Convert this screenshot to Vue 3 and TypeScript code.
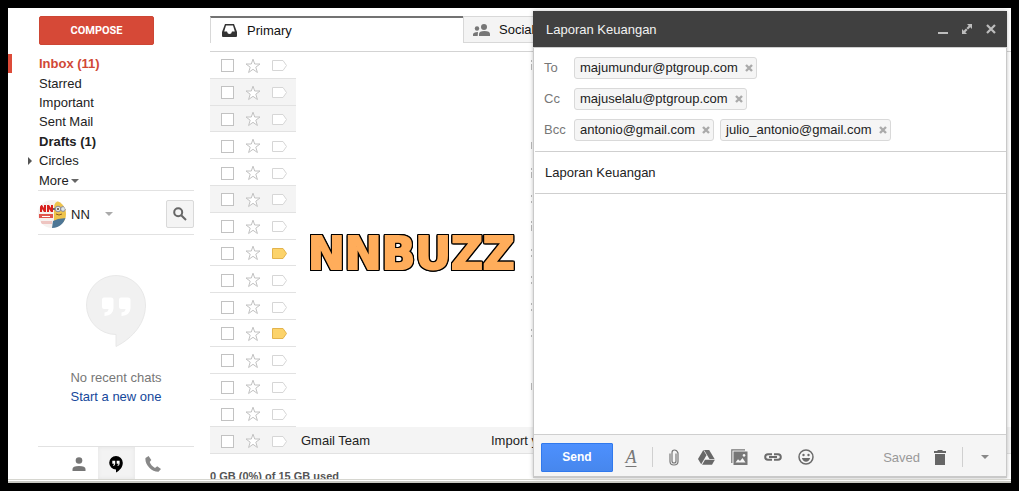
<script setup lang="ts">
import { ref } from 'vue'

interface Folder {
  name: string
  kind?: 'active' | 'bold' | 'tree' | 'more'
}

interface Mail {
  id: number
  read: boolean
  important: boolean
  mark: '' | 'letter' | 'stem' | 'dots'
  sender?: string
  subject?: string
}

interface Field {
  label: string
  people: string[]
}

const folders: Folder[] = [
  { name: 'Inbox (11)', kind: 'active' },
  { name: 'Starred' },
  { name: 'Important' },
  { name: 'Sent Mail' },
  { name: 'Drafts (1)', kind: 'bold' },
  { name: 'Circles', kind: 'tree' },
  { name: 'More', kind: 'more' },
]

const readRows = [1, 2, 5, 14]
const importantRows = [7, 10]
const marks: Mail['mark'][] = [
  'letter', '', '', 'stem', 'letter', 'dots', 'letter', 'dots',
  'dots', 'dots', 'dots', '', 'stem', '', '',
]

const mails: Mail[] = marks.map((mark, id) => ({
  id,
  mark,
  read: readRows.includes(id),
  important: importantRows.includes(id),
  sender: id === 14 ? 'Gmail Team' : undefined,
  subject: id === 14 ? 'Import your' : undefined,
}))

const fields = ref<Field[]>([
  { label: 'To', people: ['majumundur@ptgroup.com'] },
  { label: 'Cc', people: ['majuselalu@ptgroup.com'] },
  { label: 'Bcc', people: ['antonio@gmail.com', 'julio_antonio@gmail.com'] },
])

const subject = ref('Laporan Keuangan')
const message = ref('')

function removePerson(field: Field, person: string): void {
  field.people = field.people.filter((p) => p !== person)
}
</script>

<template>
  <div class="frame">
    <div class="mail">
      <aside class="sidebar">
        <button class="compose-btn" type="button">COMPOSE</button>
        <nav class="folders">
          <a v-for="f in folders" :key="f.name" href="#" :class="['folder', f.kind]">
            <svg v-if="f.kind === 'tree'" class="tree-arrow" viewBox="0 0 4 8"><path d="M0 0L4 4L0 8z" /></svg>
            <span>{{ f.name }}</span>
            <svg v-if="f.kind === 'more'" class="caret" viewBox="0 0 8 4"><path d="M0 0H8L4 4z" /></svg>
          </a>
        </nav>
        <div class="account">
          <svg class="avatar" viewBox="0 0 28 28">
            <defs><clipPath id="round"><circle cx="14" cy="14" r="14" /></clipPath></defs>
            <g clip-path="url(#round)">
              <rect width="28" height="28" fill="#f6f1ef" />
              <path d="M2 5h2l2 3V5h2v7H6L4 9v3H2zM9 5h2l2 3V5h2v7h-2l-2-3v3H9z" fill="#d8201c" />
              <path d="M1 14h14v4H1z" fill="#e0564e" />
              <path d="M4 16h8v1H4z" fill="#fff" />
              <path d="M3 21h11v3H3z" fill="#eec4c0" />
              <path d="M16 8q0-7 6-7t6 7v14H16z" fill="#eec34b" />
              <path d="M15 21l5-2 8-1v10H14z" fill="#4d7695" />
              <path d="M15 8h13v2H15z" fill="#666" />
              <circle cx="20" cy="9" r="2.800" fill="#dfe7e9" stroke="#889" />
              <circle cx="25" cy="9" r="2.400" fill="#dfe7e9" stroke="#889" />
              <circle cx="20" cy="9" r="1" fill="#5b4630" />
              <path d="M18 14q3 2 6 0" fill="none" stroke="#8b5b25" />
            </g>
          </svg>
          <span class="account-name">NN</span>
          <svg class="caret pale" viewBox="0 0 8 4"><path d="M0 0H8L4 4z" /></svg>
          <button class="search" type="button" aria-label="Search people">
            <svg viewBox="0 0 14 14"><circle cx="5.2" cy="5.2" r="4" /><path d="M8.2 8.2L13 13" /></svg>
          </button>
        </div>
        <div class="chats">
          <svg class="bubble" viewBox="0 0 60 72">
            <path d="M30 .5A29.5 29.5 0 0 0 30 59.500V71.500C47 63 59.500 48 59.500 30A29.500 29.500 0 0 0 30 .5z" fill="#f1f1f1" stroke="#e8e8e8" />
            <path d="M18 22.500h7a2.500 2.500 0 0 1 2.500 2.500v8q0 7-9 8v-3.500q4-.5 4-3.500H18a2 2 0 0 1-2-2v-7.500a2 2 0 0 1 2-2zM35 22.500h7a2.500 2.500 0 0 1 2.500 2.500v8q0 7-9 8v-3.500q4-.5 4-3.500H35a2 2 0 0 1-2-2v-7.500a2 2 0 0 1 2-2z" fill="#fff" />
          </svg>
          <p>No recent chats</p>
          <a href="#">Start a new one</a>
        </div>
        <div class="chat-tabs">
          <button type="button" aria-label="Contacts">
            <svg viewBox="0 0 14 14" width="14" height="14"><circle cx="7" cy="3.500" r="3.300" /><path d="M.5 14v-2Q.5 9 7 9t6.500 3v2z" /></svg>
          </button>
          <button type="button" class="on" aria-label="Hangouts">
            <svg viewBox="0 0 14 17" width="14" height="17">
              <path d="M7 0A6.800 6.800 0 0 0 7 13.600V16.500C11 14.500 13.800 11 13.800 6.800A6.800 6.800 0 0 0 7 0z" fill="#000" />
              <path d="M3.300 4.800h2.900v3q0 2-2 2.200V8.800q1-.2 1-1H3.300zM7.700 4.800h2.900v3q0 2-2 2.200V8.800q1-.2 1-1H7.700z" fill="#fff" />
            </svg>
          </button>
          <button type="button" aria-label="Phone">
            <svg viewBox="0 0 16 16" width="16" height="16"><path d="M3.600 0L.5 2C-.5 8 6.500 16 13.500 15.800L16 12.900 12.200 10.200 10 11.900C7.600 10.800 5.500 8.400 4.700 6L6.300 4z" fill="#888" /></svg>
          </button>
        </div>
      </aside>

      <main class="inbox">
        <div class="tabs">
          <a class="tab primary" href="#">
            <svg viewBox="0 0 15 13" width="15" height="13"><path fill-rule="evenodd" d="M3 0h9l3 8v4q0 1-1 1H1q-1 0-1-1V8zM4 1.500L2.200 7.500H5q.5 2.500 2.500 2.500T10 7.500h2.800L11 1.500z" fill="#333" /></svg>
            Primary
          </a>
          <a class="tab social" href="#">
            <svg viewBox="0 0 18 12" width="18" height="12" fill="#777"><circle cx="11" cy="3" r="3" /><circle cx="4" cy="4.500" r="2.200" /><path d="M6 12v-2q0-3 5.500-3T17 10v2zM0 12v-1.500Q0 8 5 8L4.700 12z" /></svg>
            Social
          </a>
        </div>
        <div class="list">
          <div v-for="m in mails" :key="m.id" :class="['row', { read: m.read, full: m.sender }]">
            <div class="tools">
              <input type="checkbox" :aria-label="`Select conversation ${m.id + 1}`" />
              <button type="button" aria-label="Star">
                <svg viewBox="0 0 16 16" width="16" height="16"><path d="M8 1.200L9.700 6H15L10.800 9.200 12.400 14.500 8 11.300 3.600 14.500 5.200 9.200 1 6H6.300z" fill="#fff" stroke="#c2c2c2" /></svg>
              </button>
              <button type="button" aria-label="Important">
                <svg viewBox="0 0 15 11" width="15" height="11"><path d="M.5 .5H11L14.500 5.500 11 10.500H.5z" :class="m.important ? 'flag-on' : 'flag'" /></svg>
              </button>
            </div>
            <template v-if="m.sender">
              <span class="sender">{{ m.sender }}</span>
              <span class="subject">{{ m.subject }}</span>
            </template>
            <i v-else-if="m.mark" :class="['mark', m.mark]"></i>
          </div>
          <div class="brand">NNBUZZ</div>
        </div>
        <div class="storage">0 GB (0%) of 15 GB used</div>
      </main>

      <section class="draft">
        <header class="draft-head">
          <h2>Laporan Keuangan</h2>
          <button type="button" aria-label="Minimize"><svg viewBox="0 0 10 10"><path d="M0 8h10v2H0z" /></svg></button>
          <button type="button" aria-label="Full screen">
            <svg viewBox="0 0 10 10"><path d="M5 0h5v5L8.300 3.300 6 5.500 4.500 4 6.700 1.700zM5 10H0V5L1.700 6.700 4 4.500 5.500 6 3.300 8.300z" /></svg>
          </button>
          <button type="button" aria-label="Close">
            <svg viewBox="0 0 10 10"><path d="M1 1L9 9M9 1L1 9" stroke="#bdbdbd" stroke-width="2.200" /></svg>
          </button>
        </header>
        <div class="recipients">
          <div v-for="f in fields" :key="f.label" class="field">
            <span class="label">{{ f.label }}</span>
            <span v-for="p in f.people" :key="p" class="chip">
              {{ p }}
              <button type="button" :aria-label="`Remove ${p}`" @click="removePerson(f, p)">
                <svg viewBox="0 0 8 8"><path d="M1 1L7 7M7 1L1 7" stroke="#aaa" stroke-width="2.400" /></svg>
              </button>
            </span>
          </div>
        </div>
        <input v-model="subject" class="subject-line" type="text" aria-label="Subject" />
        <textarea v-model="message" class="message" aria-label="Message body"></textarea>
        <footer class="draft-foot">
          <button class="send" type="button">Send</button>
          <button class="tool format" type="button" aria-label="Formatting options">A</button>
          <span class="sep"></span>
          <button class="tool clip" type="button" aria-label="Attach files">
            <svg viewBox="0 0 10 17" width="10" height="17"><path d="M7 4.500V12q0 2-2 2T3 12V4Q3 1 5.500 1T9 4v8.500Q9 16 5 16T1 12.500V4.500" fill="none" stroke="#777" stroke-width="1.200" /></svg>
          </button>
          <button class="tool" type="button" aria-label="Insert from Drive">
            <svg viewBox="0 0 17 15" width="17" height="15" fill="#686868"><path d="M5.300 0L8.500 5.300 3.200 14.300 0 9z" /><path d="M6 0H11.200L16.600 9H11.500z" /><path d="M7 9.700H16.900L14 14.700H4.100z" /></svg>
          </button>
          <button class="tool" type="button" aria-label="Insert photo">
            <svg viewBox="0 0 17 17" width="17" height="17"><path d="M.8 14V.8H14" fill="none" stroke="#777" stroke-width="1.200" /><path fill-rule="evenodd" d="M2.500 2.500h14v13.500h-14zM4.500 13.500h10L11.500 9 9 12 7 10.300zM13 5a1.400 1.400 0 1 0 .1 0z" fill="#777" /></svg>
          </button>
          <button class="tool" type="button" aria-label="Insert link">
            <svg viewBox="0 0 18 8" width="18" height="8"><path d="M8 1.200H4Q1.200 1.200 1.200 4T4 6.800H8M10 1.200h4Q16.800 1.200 16.800 4T14 6.800H10M5 4h8" fill="none" stroke="#6b6b6b" stroke-width="2" /></svg>
          </button>
          <button class="tool" type="button" aria-label="Insert emoticon">
            <svg viewBox="0 0 16 16" width="16" height="16"><circle cx="8" cy="8" r="7" fill="none" stroke="#6b6b6b" stroke-width="1.500" /><circle cx="5.500" cy="6" r="1.200" fill="#6b6b6b" /><circle cx="10.500" cy="6" r="1.200" fill="#6b6b6b" /><path d="M3.800 9h8.400Q11 12.700 8 12.700T3.800 9z" fill="#6b6b6b" /></svg>
          </button>
          <span class="saved">Saved</span>
          <button class="tool trash" type="button" aria-label="Discard draft">
            <svg viewBox="0 0 12 15" width="12" height="15"><path d="M0 1h3.500V0h5v1H12v2H0zM1 4h10v11H1z" fill="#666" /></svg>
          </button>
          <span class="sep"></span>
          <button class="tool menu" type="button" aria-label="More options">
            <svg class="caret" viewBox="0 0 8 4"><path d="M0 0H8L4 4z" /></svg>
          </button>
        </footer>
      </section>
    </div>
  </div>
</template>

<style>
body {
  margin: 0;
  background: #000;
}
</style>

<style scoped>
* {
  box-sizing: border-box;
}
.frame {
  height: 100vh;
  min-height: 440px;
  padding: 8px;
  background: #000;
  font: 13px/19px "Liberation Sans", Arial, sans-serif;
  color: #222;
}
button,
input,
textarea {
  margin: 0;
  padding: 0;
  border: 0;
  background: none;
  font: inherit;
  color: inherit;
}
button {
  display: flex;
  align-items: center;
  justify-content: center;
}
svg {
  display: block;
  flex: none;
}
a {
  color: inherit;
  text-decoration: none;
}
.mail {
  position: relative;
  display: flex;
  height: 100%;
  overflow: hidden;
  background: #fff;
  border-bottom: 2px solid #c9c9c3;
  padding-bottom: 2px;
}
.mail::after {
  content: "";
  position: absolute;
  left: 0;
  right: 0;
  bottom: 1px;
  height: 1px;
  background: #d6d6d0;
}
.sidebar {
  flex: none;
  display: flex;
  flex-direction: column;
  width: 202px;
  padding: 8px 16px 0 30px;
}
.compose-btn {
  flex: none;
  width: 115px;
  height: 29px;
  margin-left: 1px;
  background: #d64937;
  border: 1px solid #cd4634;
  border-radius: 2px;
  color: #fff;
  font-family: Roboto, "Liberation Sans", sans-serif;
  font-size: 11px;
  font-weight: 700;
}
.folders {
  display: grid;
  flex: none;
  grid-auto-rows: 1fr;
  height: 136px;
  margin: 9px -16px 0 -30px;
  line-height: 18px;
}
.folder {
  position: relative;
  display: flex;
  align-items: center;
  padding: 1px 0 0 31px;
}
.active {
  border-left: 4px solid #dd4b39;
  padding-left: 27px;
  color: #d14836;
  font-weight: 700;
}
.bold {
  font-weight: 700;
}
.tree-arrow {
  position: absolute;
  left: 20px;
  width: 4px;
  height: 8px;
  fill: #555;
}
.caret {
  width: 8px;
  height: 4px;
  margin-left: 2px;
  fill: #666;
}
.account {
  display: flex;
  flex: none;
  align-items: center;
  height: 45px;
  padding-top: 3px;
  border: solid #e2e2e2;
  border-width: 1px 0;
}
.avatar {
  width: 28px;
  height: 28px;
}
.account-name {
  margin-left: 5px;
}
.pale {
  margin-left: 15px;
  fill: #aaa;
}
.search {
  width: 28px;
  height: 28px;
  margin-left: auto;
  background: #f4f4f4;
  border: 1px solid #d9d9d9;
  border-radius: 2px;
}
.search svg {
  width: 14px;
  height: 14px;
  fill: none;
  stroke: #666;
  stroke-width: 2;
}
.chats {
  flex: 1;
  display: flex;
  flex-direction: column;
  align-items: center;
  padding-top: 40px;
  color: #777;
}
.bubble {
  width: 60px;
  height: 72px;
}
.chats p {
  margin: 21px 0 0;
}
.chats a {
  color: #15489b;
}
.chat-tabs {
  display: flex;
  flex: none;
  justify-content: center;
  height: 33px;
  border-top: 1px solid #e2e2e2;
}
.chat-tabs button {
  width: 37px;
  padding-top: 2px;
  fill: #777;
}
.chat-tabs .on {
  background: #f3f3f3;
  box-shadow: inset 0 0 4px #e4e4e4;
}
.inbox {
  flex: 1;
  min-width: 0;
  display: flex;
  flex-direction: column;
  padding-top: 8px;
}
.tabs {
  display: flex;
  flex: none;
  height: 36px;
  padding-bottom: 8px;
  border-bottom: 1px solid #d3d3d3;
  color: #111;
}
.tab {
  display: flex;
  align-items: center;
  width: 253px;
}
.primary {
  gap: 10px;
  padding-left: 11px;
  border-left: 1px solid #d8d8d8;
  border-top: 2px solid #737373;
}
.social {
  gap: 8px;
  padding-left: 9px;
  background: #f4f4f4;
  border: 1px solid #d8d8d8;
}
.list {
  position: relative;
  flex: 1;
  min-height: 0;
  display: grid;
  grid-auto-rows: 1fr;
}
.row {
  display: flex;
  align-items: stretch;
  min-height: 0;
}
.tools {
  display: flex;
  align-items: center;
  flex: none;
  gap: 11px;
  width: 86px;
  padding: 2px 0 0 11px;
  border-bottom: 1px solid #e2e2e2;
}
.read .tools {
  background: #f4f4f4;
}
.tools input {
  appearance: none;
  flex: none;
  width: 13px;
  height: 13px;
  background: #fff;
  border: 1px solid #c2c2c2;
}
.flag {
  fill: #fff;
  stroke: #d6d6d6;
}
.flag-on {
  fill: #fcd36a;
  stroke: #e3b34c;
}
.full {
  line-height: 27px;
  background: #f4f4f4;
  border-bottom: 1px solid #e2e2e2;
}
.full .tools {
  border-bottom: 0;
}
.sender {
  width: 195px;
  padding-left: 5px;
}
.subject {
  flex: 1;
  min-width: 0;
  overflow: hidden;
  white-space: nowrap;
}
.mark {
  align-self: center;
  width: 1px;
  height: 10px;
  margin-left: 235px;
}
.letter {
  background: linear-gradient(#bbb 2px, transparent 2px 4px, #bbb 4px);
}
.stem {
  height: 7px;
  background: #bbb;
}
.dots {
  height: 8px;
  background: linear-gradient(#bbb 2px, transparent 2px 6px, #bbb 6px);
}
.brand {
  position: absolute;
  left: 98px;
  top: 176px;
  font: 700 44px/52px "DejaVu Sans", sans-serif;
  color: #ffad5b;
  -webkit-text-stroke: 2px #ffad5b;
  filter: drop-shadow(1px 0 #000) drop-shadow(-1px 0 #000) drop-shadow(0 1px #000) drop-shadow(0 -1px #000);
}
.storage {
  flex: none;
  height: 25px;
  padding-top: 14px;
  overflow: hidden;
  color: #555;
  font-size: 11px;
  font-weight: 700;
  line-height: 16px;
}
.draft {
  position: absolute;
  top: 3px;
  right: 4px;
  bottom: 3px;
  display: flex;
  flex-direction: column;
  width: 474px;
  background: #fff;
  border: solid #c9c9c9;
  border-width: 0 1px 2px;
  box-shadow: 0 0 4px rgba(0, 0, 0, 0.25);
}
.draft-head {
  display: flex;
  flex: none;
  align-items: center;
  height: 37px;
  margin: 0 -1px;
  padding: 0 11px 0 13px;
  background: #404040;
  border-bottom: 1px solid #cfcfcf;
  color: #f2f2f2;
}
.draft-head h2 {
  flex: 1;
  margin: 0;
  font-size: 13px;
  font-weight: 400;
}
.draft-head button {
  margin-left: 14px;
}
.draft-head svg {
  width: 10px;
  height: 10px;
  fill: #bdbdbd;
}
.recipients {
  display: flex;
  flex-direction: column;
  flex: none;
  gap: 9px;
  margin-left: 1px;
  padding: 9px 0 10px 9px;
  border-bottom: 1px solid #cfcfcf;
}
.field {
  display: flex;
  gap: 6px;
  height: 22px;
  line-height: 22px;
}
.label {
  width: 24px;
  color: #777;
}
.chip {
  display: flex;
  align-items: center;
  gap: 7px;
  padding: 0 3px 0 5px;
  background: #f5f5f5;
  border: 1px solid #d9d9d9;
  border-radius: 3px;
}
.chip svg {
  width: 8px;
  height: 8px;
}
.subject-line {
  flex: none;
  height: 42px;
  margin-left: 1px;
  padding-left: 10px;
  border-bottom: 1px solid #cfcfcf;
  outline: 0;
}
.message {
  flex: 1;
  min-height: 0;
  padding: 10px;
  outline: 0;
  resize: none;
}
.draft-foot {
  display: flex;
  flex: none;
  align-items: center;
  height: 42px;
  padding: 3px 7px 0;
  background: #f5f5f5;
  border-top: 1px solid #cfcfcf;
}
.send {
  width: 72px;
  height: 29px;
  margin-right: 8px;
  background: linear-gradient(#4d90fe, #4787ed);
  border: 1px solid #3079ed;
  border-radius: 1px;
  color: #fff;
  font-size: 12px;
  font-weight: 700;
}
.tool {
  width: 33px;
  height: 28px;
}
.clip {
  width: 32px;
}
.format {
  width: 20px;
  font: italic 18px/19px "Liberation Serif", serif;
  color: #777;
  text-decoration: underline;
  text-underline-offset: 3px;
}
.sep {
  width: 1px;
  height: 20px;
  margin: 0 5px 0 11px;
  background: #d0d0d0;
}
.saved {
  margin-left: auto;
  margin-right: 4px;
  color: #999;
}
.trash {
  width: 32px;
}
.trash + .sep {
  margin: 0 6px 0 6px;
}
.menu {
  width: 20px;
  margin: 0 4px 0 6px;
}
.menu .caret {
  margin: 0;
  fill: #888;
}
</style>
